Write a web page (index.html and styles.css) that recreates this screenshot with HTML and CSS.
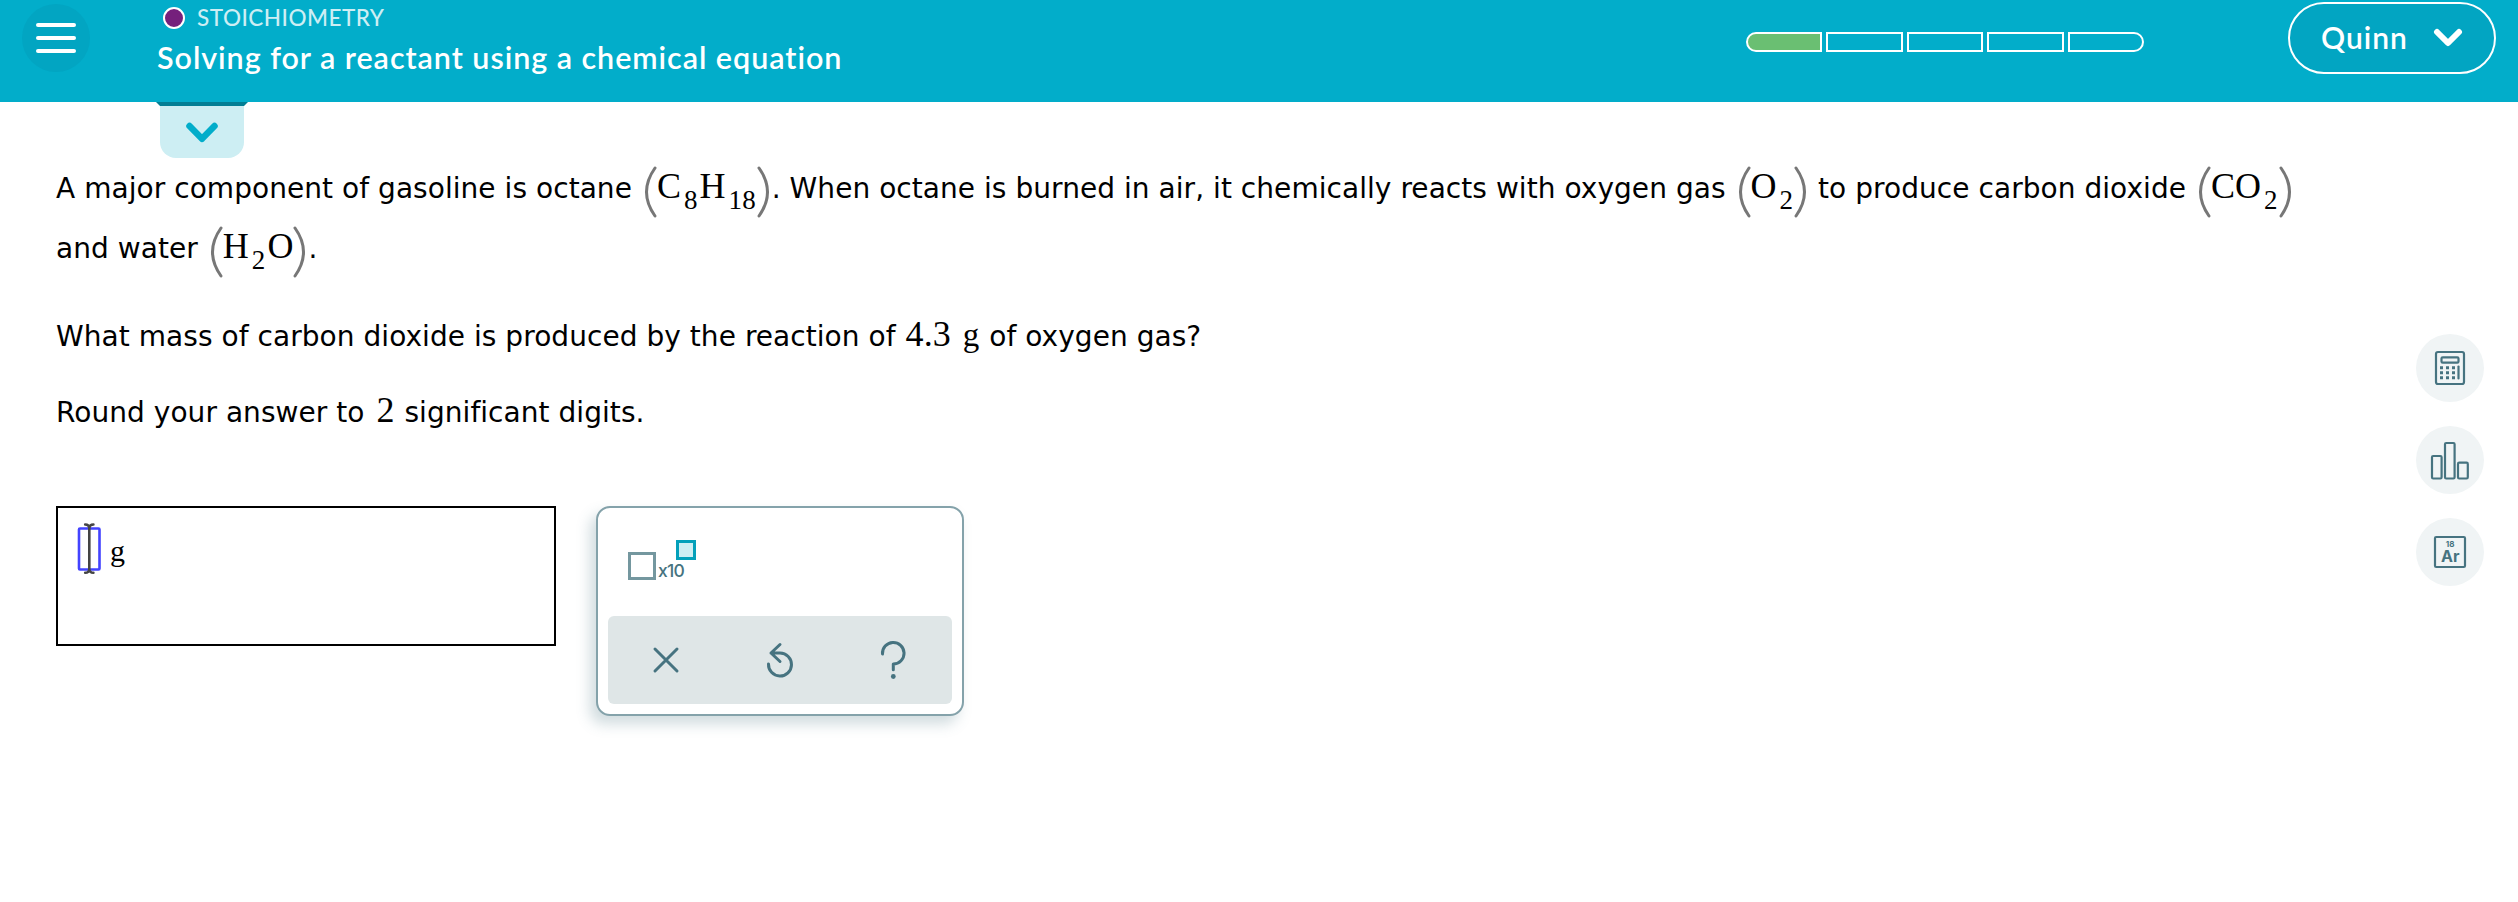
FILE: index.html
```
<!DOCTYPE html>
<html lang="en">

<head>
    <meta charset="UTF-8">
    <title>Solving for a reactant using a chemical equation</title>
    <link rel="stylesheet" href="styles.css">
</head>

<body>
    <header class="topbar">
        <button class="menu-btn" aria-label="Menu">
            <span></span>
            <span></span>
            <span></span>
        </button>
        <div class="titles">
            <div class="category"><i class="dot"></i><span>STOICHIOMETRY</span></div>
            <h1>Solving for a reactant using a chemical equation</h1>
        </div>
        <div class="progress">
            <span class="done"></span>
            <span></span>
            <span></span>
            <span></span>
            <span></span>
        </div>
        <button class="user-btn">
            <span>Quinn</span>
            <svg width="30" height="20" viewBox="0 0 30 20">
                <path d="M4 4 L15 15 L26 4" />
            </svg>
        </button>
        <div class="drawer">
            <svg width="32" height="22" viewBox="0 0 32 22">
                <path d="M3.5 4 L16 16.8 L28.5 4" />
            </svg>
        </div>
    </header>

    <main>
        <div class="question">
            <p class="intro">
                <span>A major component of gasoline is octane</span>
                <span class="formula"><svg class="paren" viewBox="0 0 13 52"><path d="M11 2 Q-6 26 11 50" /></svg>C<sub>8</sub>H<sub class="wide">18</sub><svg class="paren close" viewBox="0 0 13 52"><path d="M2 2 Q19 26 2 50" /></svg></span><span>.</span>
                <span>When octane is burned in air, it chemically reacts with oxygen gas</span>
                <span class="formula"><svg class="paren" viewBox="0 0 13 52"><path d="M11 2 Q-6 26 11 50" /></svg>O<sub>2</sub><svg class="paren close" viewBox="0 0 13 52"><path d="M2 2 Q19 26 2 50" /></svg></span>
                <span>to produce carbon dioxide</span>
                <span class="formula"><svg class="paren" viewBox="0 0 13 52"><path d="M11 2 Q-6 26 11 50" /></svg>CO<sub>2</sub><svg class="paren close" viewBox="0 0 13 52"><path d="M2 2 Q19 26 2 50" /></svg></span>
                <br>
                <span>and water</span>
                <span class="formula"><svg class="paren" viewBox="0 0 13 52"><path d="M11 2 Q-6 26 11 50" /></svg>H<sub>2</sub>O<svg class="paren" viewBox="0 0 13 52"><path d="M2 2 Q19 26 2 50" /></svg></span><span>.</span>
            </p>
            <p class="ask">What mass of carbon dioxide is produced by the reaction of <span class="num">4.3</span> <span class="unit">g</span> of oxygen gas?</p>
            <p class="round">Round your answer to <span class="num">2</span> significant digits.</p>
        </div>

        <div class="work">
            <div class="answer">
                <svg width="26" height="52" viewBox="0 0 26 52">
                    <rect class="slot" x="2" y="5.5" width="20.5" height="41" rx="1" />
                    <path class="caret" d="M8.2 1.5 Q12 1.5 12.3 5 V46 Q12 49.8 8.2 49.8 M16.4 1.5 Q12.6 1.5 12.3 5 M12.3 46 Q12.6 49.8 16.4 49.8" />
                </svg>
                <span class="answer-unit">g</span>
            </div>

            <div class="palette">
                <div class="sci">
                    <i class="base"></i><span>x10</span><i class="exp"></i>
                </div>
                <div class="actions">
                    <svg width="50" height="50" viewBox="0 0 50 50">
                        <path d="M14 14 L36 36 M36 14 L14 36" />
                    </svg>
                    <svg width="50" height="50" viewBox="0 0 50 50">
                        <path d="M13.5 29 A11.5 11.5 0 1 0 25 18 H16 M25 9.5 L16 18 L25 26.5" />
                    </svg>
                    <svg width="50" height="50" viewBox="0 0 50 50">
                        <path d="M13.5 19 A10.8 10.8 0 1 1 24.3 29 V34.8" />
                        <circle cx="24.3" cy="41.5" r="2.4" />
                    </svg>
                </div>
            </div>
        </div>
    </main>

    <aside class="tools">
        <button aria-label="Calculator">
            <svg width="68" height="68" viewBox="0 0 68 68">
                <rect x="20" y="18" width="28" height="32" rx="2" />
                <rect x="25.5" y="23.3" width="17" height="5.4" rx="1.2" />
                <path class="keys" d="M24 33.7 h3 M30 33.7 h3 M36 33.7 h3 M24 38.7 h3 M30 38.7 h3 M36 38.7 h3 M24 43.7 h3 M30 43.7 h3 M36 43.7 h3" />
                <path d="M42.5 32.5 V44.5" />
            </svg>
        </button>
        <button aria-label="Chart">
            <svg width="68" height="68" viewBox="0 0 68 68">
                <rect x="16" y="30" width="9.6" height="22.5" rx="1.2" />
                <rect x="29" y="17" width="9.6" height="35.5" rx="1.2" />
                <rect x="42" y="36.7" width="9.8" height="15.8" rx="1.2" />
            </svg>
        </button>
        <button aria-label="Periodic table">
            <svg width="68" height="68" viewBox="0 0 68 68">
                <rect x="19" y="19" width="30" height="30" rx="1.2" />
                <text x="34.2" y="28.5" class="z">18</text>
                <text x="34.2" y="43.8" class="el">Ar</text>
            </svg>
        </button>
    </aside>
</body>

</html>
```
FILE: styles.css
```
* {
    box-sizing: border-box;
}

body {
    margin: 0;
    height: 902px;
    background: #fff;
    color: #000;
    font-family: "DejaVu Sans", Verdana, sans-serif;
    position: relative;
    overflow: hidden;
}

button {
    border: none;
    padding: 0;
    cursor: pointer;
}

p,
h1 {
    margin: 0;
}

svg {
    fill: none;
    stroke-linecap: round;
    stroke-linejoin: round;
    display: block;
}

/* header */
.topbar {
    height: 102px;
    background: #02adca;
    color: #fff;
    display: flex;
    align-items: flex-start;
    padding: 0 22px;
    position: relative;
    font-family: Lato, "Open Sans", sans-serif;
}

.menu-btn {
    width: 68px;
    height: 68px;
    margin-top: 4px;
    border-radius: 50%;
    background: #02a5c2;
    display: flex;
    flex-direction: column;
    align-items: center;
    justify-content: center;
    gap: 9px;
}

.menu-btn span {
    width: 40px;
    height: 4px;
    border-radius: 2px;
    background: #fff;
}

.titles {
    margin-left: 67px;
}

.category {
    display: flex;
    align-items: center;
    gap: 12px;
    height: 36px;
    padding-left: 6px;
    font-size: 22.5px;
    font-weight: 500;
    color: #cdeef4;
    letter-spacing: 0.5px;
}

.category span {
    margin-top: -1px;
}

.dot {
    width: 22px;
    height: 22px;
    border-radius: 50%;
    border: 2px solid #fff;
    background: #75207c;
}

h1 {
    font-size: 30.5px;
    line-height: 42px;
    font-weight: 600;
    letter-spacing: 0.95px;
    white-space: nowrap;
}

.progress {
    display: flex;
    gap: 4px;
    margin: 32px 144px 0 auto;
}

.progress span {
    width: 76.4px;
    height: 20px;
    border: 2px solid #fff;
}

.progress .done {
    background: #6abf72;
    border-radius: 10px 0 0 10px;
}

.progress span:last-child {
    border-radius: 0 10px 10px 0;
}

.user-btn {
    width: 208px;
    height: 72px;
    margin-top: 2px;
    border: 2px solid #fff;
    border-radius: 36px;
    background: #02a5c2;
    color: #fff;
    display: flex;
    align-items: center;
    padding: 0 0 2px 31px;
    gap: 25px;
    font: 600 30px Lato, sans-serif;
    letter-spacing: 1px;
}

.user-btn svg {
    margin-top: 2px;
    stroke: #fff;
    stroke-width: 6;
}

.drawer {
    position: absolute;
    left: 160px;
    top: 102px;
    width: 84px;
    height: 56px;
    border-radius: 0 0 16px 16px;
    background: #cdeef3;
    display: flex;
    justify-content: center;
    padding-top: 20px;
}

/* folded edge under the header */
.drawer::before {
    content: "";
    position: absolute;
    left: -4px;
    top: 0;
    width: 92px;
    height: 4px;
    background: #027e94;
    clip-path: polygon(0 0, 100% 0, calc(100% - 4px) 100%, 4px 100%);
}

.drawer svg {
    stroke: #02adca;
    stroke-width: 6.5;
}

/* problem text */
main {
    padding: 57px 0 0 56px;
}

.question {
    font-size: 28px;
    letter-spacing: 0.05px;
    white-space: nowrap;
}

.intro {
    line-height: 60px;
}

.formula,
.num,
.unit,
.answer-unit {
    font-family: "Liberation Serif", "Times New Roman", serif;
}

.formula {
    font-size: 36px;
    line-height: 0;
    margin: 0 2px 0 3px;
}

.formula sub {
    font-size: 27px;
    line-height: 0;
    vertical-align: -11px;
    margin: 0 2px 0 3px;
}

.formula .wide {
    margin-left: 3px;
}

.paren {
    display: inline-block;
    width: 13px;
    height: 52px;
    margin: -20px 0 -20px 0;
    vertical-align: 0;
    stroke: #777;
    stroke-width: 3;
}

.formula .close {
    margin-left: -1px;
}

.num {
    font-size: 36px;
    line-height: 0;
    margin: 0 1px;
}

.unit {
    font-size: 33px;
    line-height: 0;
    margin: 0 1px 0 2px;
}

.ask {
    line-height: 60px;
    margin-top: 28px;
}

.round {
    line-height: 60px;
    margin-top: 16px;
}

.round .num {
    margin: 0 1px 0 3px;
}

/* answer area */
.work {
    display: flex;
    gap: 40px;
    margin-top: 63px;
}

.answer {
    width: 500px;
    height: 140px;
    border: 2px solid #000;
    padding: 15px 0 0 19px;
    display: flex;
    gap: 7px;
}

.slot {
    stroke: #4343ff;
    stroke-width: 2.6;
}

.caret {
    stroke: #444;
    stroke-width: 2.6;
}

.answer-unit {
    font-size: 30px;
    line-height: 55px;
}

.palette {
    width: 368px;
    height: 210px;
    border: 2px solid #84a2aa;
    border-radius: 14px;
    background: #fff;
    box-shadow: -6px 8px 14px rgba(70, 115, 128, 0.25);
    padding: 32px 10px 10px;
    display: flex;
    flex-direction: column;
    justify-content: space-between;
}

.sci {
    display: flex;
    align-items: flex-start;
    padding-left: 20px;
    font: 500 17.5px Inter, sans-serif;
    color: #467380;
}

.base {
    width: 28px;
    height: 28px;
    margin-top: 12px;
    border: 3px solid #74979f;
}

.sci span {
    width: 20px;
    margin: 20px 0 0 2px;
    letter-spacing: -0.8px;
    white-space: nowrap;
}

.exp {
    width: 20px;
    height: 20px;
    margin-left: -2px;
    border: 3px solid #03a0ba;
    background: #cdeef3;
}

.actions {
    height: 88px;
    border-radius: 6px;
    background: #dfe6e7;
    display: flex;
    align-items: center;
    justify-content: space-between;
    padding: 0 33px;
}

.actions svg {
    stroke: #467380;
    stroke-width: 3;
}

.actions circle {
    fill: #467380;
    stroke: none;
}

/* side tools */
.tools {
    position: absolute;
    right: 34px;
    top: 334px;
    display: flex;
    flex-direction: column;
    gap: 24px;
}

.tools button {
    width: 68px;
    height: 68px;
    border-radius: 50%;
    background: #f0f4f5;
}

.tools svg {
    stroke: #467380;
    stroke-width: 2.2;
}

.tools .keys {
    stroke-width: 3;
    stroke-linecap: butt;
}

.tools text {
    fill: #467380;
    stroke: none;
    text-anchor: middle;
    font-family: Inter, sans-serif;
    font-weight: 700;
}

.z {
    font-size: 8px;
}

.el {
    font-size: 16px;
}
```
